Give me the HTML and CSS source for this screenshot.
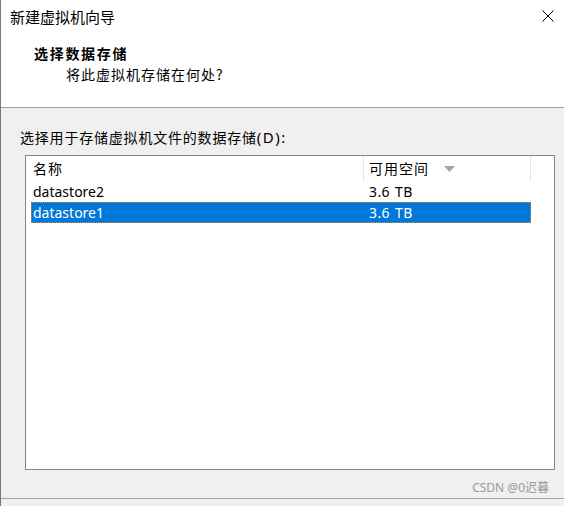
FILE: index.html
```html
<!DOCTYPE html>
<html lang="zh-CN">
<head>
<meta charset="utf-8">
<title>新建虚拟机向导</title>
<link rel="stylesheet" href="styles.css">
</head>
<body>
<div class="window">
  <div class="header">
    <div class="titlebar">
      <span class="title">新建虚拟机向导</span>
      <svg class="close" width="12" height="12" viewBox="0 0 12 12"><path d="M0.5 0.5 L11.5 11.5 M11.5 0.5 L0.5 11.5" stroke="#000" stroke-width="1" fill="none"/></svg>
    </div>
    <div class="heading">选择数据存储</div>
    <div class="subheading">将此虚拟机存储在何处?</div>
  </div>
  <div class="body">
    <div class="label">选择用于存储虚拟机文件的数据存储<span class="key">(D):</span></div>
    <div class="list">
      <div class="list-head">
        <div class="hcell hname">名称</div>
        <div class="hcell hspace">可用空间
          <svg class="sort" width="11" height="6" viewBox="0 0 11 6"><path d="M0 0 H11 L5.5 6 Z" fill="#a3a3a3"/></svg>
        </div>
      </div>
      <div class="row">
        <div class="cell name">datastore2</div>
        <div class="cell space">3.6 TB</div>
      </div>
      <div class="row selected">
        <div class="cell name">datastore1</div>
        <div class="cell space">3.6 TB</div>
      </div>
    </div>
    <div class="watermark">CSDN @0迟暮</div>
  </div>
  <div class="footer"></div>
</div>
</body>
</html>
```
FILE: styles.css
```css
html, body {
  margin: 0;
  padding: 0;
}
body {
  width: 564px;
  height: 506px;
  overflow: hidden;
  font-family: "Noto Sans", "Noto Sans CJK SC", sans-serif;
  color: #000;
  background: #f0f0f0;
}
.window {
  display: flex;
  flex-direction: column;
  height: 506px;
  border-left: 1px solid #7a7a7a;
  box-sizing: border-box;
}
.header {
  background: #fff;
  height: 108px;
  box-sizing: border-box;
  border-bottom: 1px solid #a0a0a0;
}
.titlebar {
  display: flex;
  justify-content: space-between;
  align-items: flex-start;
  padding: 6px 10px 0 9px;
}
.title {
  font-family: "Noto Sans CJK SC", sans-serif;
  font-size: 15px;
  line-height: 21px;
}
.close {
  display: block;
  margin-top: 4px;
}
.heading {
  font-family: "Noto Sans CJK SC", sans-serif;
  font-weight: bold;
  font-size: 14px;
  letter-spacing: 1.7px;
  line-height: 20px;
  padding-left: 33px;
  margin-top: 16px;
}
.subheading {
  font-family: "Noto Sans CJK SC", sans-serif;
  font-size: 14px;
  letter-spacing: 1px;
  line-height: 20px;
  padding-left: 65px;
  margin-top: 1px;
}
.body {
  flex: 1;
  display: flex;
  flex-direction: column;
  padding: 19px 0 0 19px;
  background: #f0f0f0;
}
.label {
  font-size: 14px;
  line-height: 20px;
  letter-spacing: 0.8px;
}
.label .key {
  font-size: 15px;
  letter-spacing: 1.5px;
}
.list {
  margin-top: 7px;
  margin-left: 5px;
  width: 530px;
  height: 315px;
  box-sizing: border-box;
  border: 1px solid #828790;
  background: #fff;
}
.list-head {
  display: flex;
  height: 25px;
}
.hcell {
  box-sizing: border-box;
  border-right: 1px solid #e5e5e5;
  font-size: 14px;
  letter-spacing: 1px;
  line-height: 25px;
  display: flex;
  align-items: center;
}
.hname {
  width: 338px;
  padding-left: 7px;
}
.hspace {
  width: 167px;
  padding-left: 5px;
}
.sort {
  margin-left: 15px;
  margin-top: 1px;
}
.row {
  display: flex;
  height: 21px;
  margin-left: 5px;
  width: 500px;
  box-sizing: border-box;
  font-size: 14px;
  line-height: 21px;
}
.cell.name {
  width: 332px;
  padding-left: 2px;
  box-sizing: border-box;
}
.cell.space {
  padding-left: 6px;
  word-spacing: 1px;
  letter-spacing: 0.4px;
}
.row.selected {
  background: #0078d7;
  color: #fff;
  outline: 1px dotted #d9893a;
  outline-offset: -1px;
}
.watermark {
  margin-top: auto;
  align-self: flex-end;
  padding-right: 15px;
  font-size: 12px;
  line-height: 16px;
  color: #9a9a9a;
  margin-bottom: 2px;
}
.footer {
  height: 7px;
  border-top: 1px solid #a0a0a0;
  background: #f0f0f0;
}
```
